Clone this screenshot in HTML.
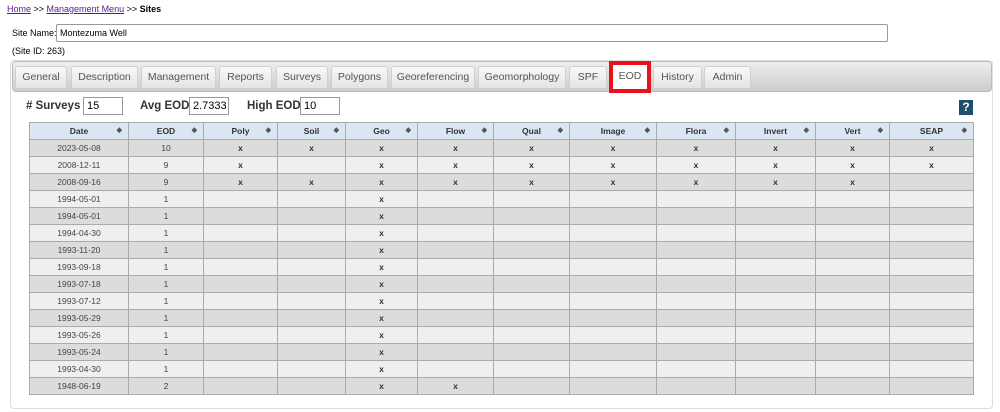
<!DOCTYPE html>
<html><head><meta charset="utf-8"><style>
*{box-sizing:border-box;margin:0;padding:0}
body{width:1000px;height:412px;background:#fff;font-family:"Liberation Sans",Arial,sans-serif;font-size:9px;color:#000;position:relative;overflow:hidden}
.a{position:absolute}
a{color:#551a8b;text-decoration:underline}
.panel{left:10px;top:60px;width:983px;height:349px;border:1px solid #ddd;border-radius:4px}
.tabbar{left:12px;top:61px;width:980px;height:31px;border:1px solid #bbb;border-radius:4px;background:linear-gradient(#eee,#ccc)}
.tab{position:absolute;top:66px;height:22px;background:linear-gradient(#f8f8f8,#e4e4e4);border:1px solid #d0d0d0;border-bottom:none;border-radius:3px 3px 0 0;font-size:10.5px;color:#555;text-align:center;line-height:21px}
table{position:absolute;left:29px;top:122px;border-collapse:collapse;width:944px;table-layout:fixed;font-size:8.5px;color:#444}
td,th{border:1px solid #aaa;text-align:center;height:17px;padding:0}
th{background:#dce6f2;color:#333;font-weight:bold;position:relative;height:17px}
th span{position:absolute;right:6px;top:3px;font-size:7px;color:#555}
tr:nth-child(even) td{background:#dcdcdc}
tr:nth-child(odd) td{background:#efefef}
td.x{font-weight:bold;color:#333}
.box{position:absolute;border:1px solid #999;background:#fff;font-size:11px;padding-left:3px;line-height:16px;height:18px}
.lbl{position:absolute;font-size:11.5px;font-weight:bold;color:#333;font-family:"Liberation Sans",sans-serif}
</style></head><body>
<div class="a" style="left:7px;top:4px;font-size:9px"><a>Home</a> &gt;&gt; <a>Management Menu</a> &gt;&gt; <b>Sites</b></div>
<div class="a" style="left:12px;top:28px;font-size:9px">Site Name:</div>
<div class="a" style="left:56px;top:24px;width:832px;height:18px;border:1px solid #999;border-radius:2px;font-size:9px;line-height:16px;padding-left:3px">Montezuma Well</div>
<div class="a" style="left:12px;top:46px;font-size:9px">(Site ID: 263)</div>
<div class="a panel"></div>
<div class="a tabbar"></div>
<div class="tab" style="left:15px;width:52px">General</div>
<div class="tab" style="left:71px;width:67px">Description</div>
<div class="tab" style="left:141px;width:75px">Management</div>
<div class="tab" style="left:219px;width:53px">Reports</div>
<div class="tab" style="left:276px;width:52px">Surveys</div>
<div class="tab" style="left:331px;width:57px">Polygons</div>
<div class="tab" style="left:391px;width:84px">Georeferencing</div>
<div class="tab" style="left:478px;width:88px">Geomorphology</div>
<div class="tab" style="left:569px;width:38px">SPF</div>
<div class="a" style="left:609px;top:61px;width:42px;height:32px;border:4px solid #e8121c;background:#fff;font-size:10.5px;color:#555;text-align:center;line-height:23px">EOD</div>
<div class="tab" style="left:653px;width:49px">History</div>
<div class="tab" style="left:704px;width:47px">Admin</div>
<div class="lbl" style="left:26px;top:100px">#&nbsp;Surveys</div>
<div class="box" style="left:83px;top:97px;width:40px">15</div>
<div class="lbl" style="left:140px;top:100px">Avg EOD</div>
<div class="box" style="left:189px;top:97px;width:40px">2.7333</div>
<div class="lbl" style="left:247px;top:100px">High EOD</div>
<div class="box" style="left:300px;top:97px;width:40px">10</div>
<div class="a" style="left:959px;top:100px;width:14px;height:15px;background:#1d4e6e;color:#fff;font-weight:bold;font-size:12px;text-align:center;line-height:15px">?</div>
<table>
<colgroup><col style="width:99px"><col style="width:75px"><col style="width:74px"><col style="width:68px"><col style="width:72px"><col style="width:76px"><col style="width:76px"><col style="width:87px"><col style="width:79px"><col style="width:80px"><col style="width:74px"><col style="width:84px"></colgroup>
<tr><th>Date<span>◆</span></th><th>EOD<span>◆</span></th><th>Poly<span>◆</span></th><th>Soil<span>◆</span></th><th>Geo<span>◆</span></th><th>Flow<span>◆</span></th><th>Qual<span>◆</span></th><th>Image<span>◆</span></th><th>Flora<span>◆</span></th><th>Invert<span>◆</span></th><th>Vert<span>◆</span></th><th>SEAP<span>◆</span></th></tr>
<tr><td>2023-05-08</td><td>10</td><td class="x">x</td><td class="x">x</td><td class="x">x</td><td class="x">x</td><td class="x">x</td><td class="x">x</td><td class="x">x</td><td class="x">x</td><td class="x">x</td><td class="x">x</td></tr>
<tr><td>2008-12-11</td><td>9</td><td class="x">x</td><td></td><td class="x">x</td><td class="x">x</td><td class="x">x</td><td class="x">x</td><td class="x">x</td><td class="x">x</td><td class="x">x</td><td class="x">x</td></tr>
<tr><td>2008-09-16</td><td>9</td><td class="x">x</td><td class="x">x</td><td class="x">x</td><td class="x">x</td><td class="x">x</td><td class="x">x</td><td class="x">x</td><td class="x">x</td><td class="x">x</td><td></td></tr>
<tr><td>1994-05-01</td><td>1</td><td></td><td></td><td class="x">x</td><td></td><td></td><td></td><td></td><td></td><td></td><td></td></tr>
<tr><td>1994-05-01</td><td>1</td><td></td><td></td><td class="x">x</td><td></td><td></td><td></td><td></td><td></td><td></td><td></td></tr>
<tr><td>1994-04-30</td><td>1</td><td></td><td></td><td class="x">x</td><td></td><td></td><td></td><td></td><td></td><td></td><td></td></tr>
<tr><td>1993-11-20</td><td>1</td><td></td><td></td><td class="x">x</td><td></td><td></td><td></td><td></td><td></td><td></td><td></td></tr>
<tr><td>1993-09-18</td><td>1</td><td></td><td></td><td class="x">x</td><td></td><td></td><td></td><td></td><td></td><td></td><td></td></tr>
<tr><td>1993-07-18</td><td>1</td><td></td><td></td><td class="x">x</td><td></td><td></td><td></td><td></td><td></td><td></td><td></td></tr>
<tr><td>1993-07-12</td><td>1</td><td></td><td></td><td class="x">x</td><td></td><td></td><td></td><td></td><td></td><td></td><td></td></tr>
<tr><td>1993-05-29</td><td>1</td><td></td><td></td><td class="x">x</td><td></td><td></td><td></td><td></td><td></td><td></td><td></td></tr>
<tr><td>1993-05-26</td><td>1</td><td></td><td></td><td class="x">x</td><td></td><td></td><td></td><td></td><td></td><td></td><td></td></tr>
<tr><td>1993-05-24</td><td>1</td><td></td><td></td><td class="x">x</td><td></td><td></td><td></td><td></td><td></td><td></td><td></td></tr>
<tr><td>1993-04-30</td><td>1</td><td></td><td></td><td class="x">x</td><td></td><td></td><td></td><td></td><td></td><td></td><td></td></tr>
<tr><td>1948-06-19</td><td>2</td><td></td><td></td><td class="x">x</td><td class="x">x</td><td></td><td></td><td></td><td></td><td></td><td></td></tr>
</table>
</body></html>
